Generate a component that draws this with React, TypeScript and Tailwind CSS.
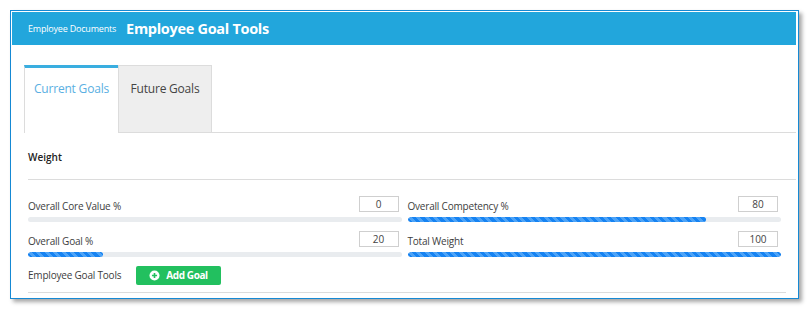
import React from 'react'

type Weight = { label: string; value: number }

const rows: Weight[][] = [
  [
    { label: 'Overall Core Value %', value: 0 },
    { label: 'Overall Competency %', value: 80 },
  ],
  [
    { label: 'Overall Goal %', value: 20 },
    { label: 'Total Weight', value: 100 },
  ],
]

function WeightField({ label, value }: Weight) {
  return (
    <div className="flex flex-col">
      <div className="flex items-end justify-between">
        <span className="text-[10px] leading-[12px] tracking-[-0.2px] text-[#3d3d3d]">{label}</span>
        <div className="mr-[3px] flex h-[16px] w-[40px] items-center justify-center border border-[#cfcfcf] text-[10px] text-[#444]">
          {value}
        </div>
      </div>
      <div className="mt-[5px] h-[5px] w-full overflow-hidden rounded-full bg-[#e9ecef]">
        <div
          className="h-full rounded-full bg-[repeating-linear-gradient(45deg,#1683f2_0px,#1683f2_3px,#4da3f7_3px,#4da3f7_6px)]"
          style={{ width: `${value}%` }}
        />
      </div>
    </div>
  )
}

function PlusCircle() {
  return (
    <svg width="11" height="11" viewBox="0 0 12 12">
      <circle cx="6" cy="6" r="5.5" fill="#fff" />
      <path d="M6 3.2v5.6M3.2 6h5.6" stroke="#22c05f" strokeWidth="1.8" />
    </svg>
  )
}

export default function App() {
  return (
    <div className="h-[310px] w-[810px] bg-white p-[10px] font-['Open_Sans',sans-serif]">
      <div className="w-[789px] border border-[#1589d4] bg-white pt-px pr-[2px] pb-[5px] pl-px shadow-[3px_3px_4px_rgba(0,0,0,0.35)]">
        {/* Header */}
        <div className="flex h-[33px] items-center bg-[#22a6dc] pl-[16px] text-white">
          <span className="text-[9px] tracking-[-0.2px]">Employee Documents</span>
          <span className="ml-[10px] text-[14.5px] font-bold tracking-[-0.3px]">Employee Goal Tools</span>
        </div>

        {/* Tabs */}
        <div className="mt-[20px] ml-[12px] flex">
          <div className="h-[68px] w-[94px] border-t-[3px] border-l border-t-[#3aaee0] border-l-[#dcdcdc] pt-[12px] text-center text-[12px] tracking-[-0.2px] text-[#5aafe2]">
            Current Goals
          </div>
          <div className="h-[68px] w-[94px] border border-[#dcdcdc] bg-[#eeeeee] pt-[14px] text-center text-[12px] tracking-[-0.2px] text-[#444]">
            Future Goals
          </div>
          <div className="flex-1 border-b border-[#dcdcdc]" />
        </div>

        {/* Weight heading */}
        <div className="ml-[16px] flex h-[47px] items-center border-b border-[#dcdcdc] pt-[2px] text-[10px] font-semibold text-[#222]">
          Weight
        </div>

        {/* Weight fields */}
        <div className="mt-[16px] mr-[15px] ml-[16px] flex flex-col gap-[9px]">
          {rows.map((row, i) => (
            <div key={i} className="grid grid-cols-2 gap-[6px]">
              {row.map((w) => (
                <WeightField key={w.label} {...w} />
              ))}
            </div>
          ))}
        </div>

        <div className="mt-[9px] mr-[10px] ml-[16px] border-b border-[#dcdcdc] pb-[7px]">
          <div className="flex items-center">
            <span className="w-[108px] text-[10px] tracking-[-0.2px] text-[#3d3d3d]">Employee Goal Tools</span>
            <button className="flex h-[19px] w-[85px] items-center justify-center gap-[6px] rounded-[2px] bg-[#22c05f] text-[10px] font-bold tracking-[-0.4px] text-white">
              <PlusCircle />
              Add Goal
            </button>
          </div>
        </div>
      </div>
    </div>
  )
}
